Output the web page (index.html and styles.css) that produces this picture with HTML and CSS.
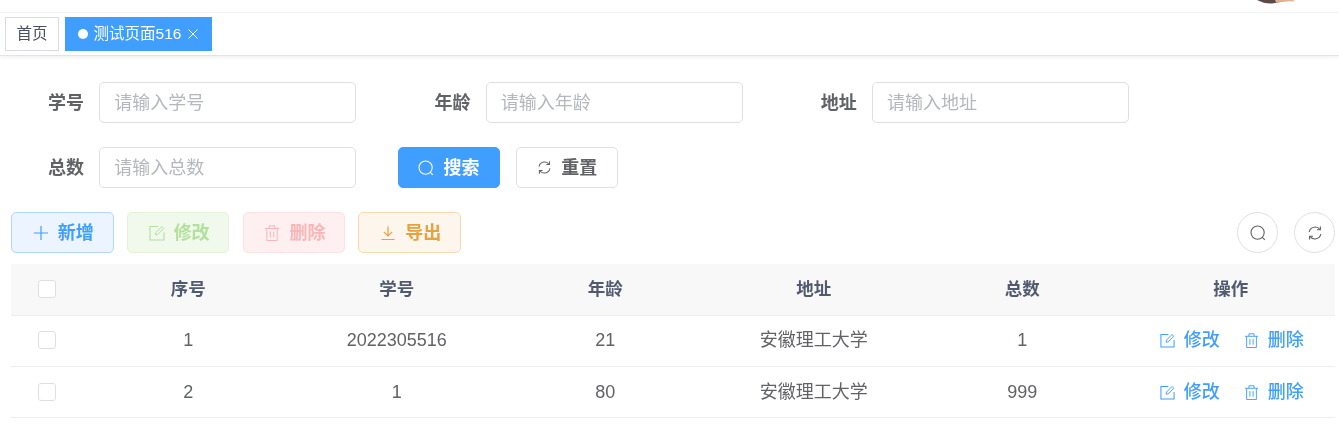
FILE: index.html
```html
<!DOCTYPE html>
<html lang="zh">
<head>
<meta charset="utf-8">
<title>测试页面516</title>
<link rel="stylesheet" href="styles.css">
</head>
<body>
<svg class="sprite" width="0" height="0" aria-hidden="true">
  <symbol id="i-search" viewBox="0 0 16 16"><circle cx="7.6" cy="7.6" r="6.6" fill="none" stroke="currentColor" stroke-width="1.1"/><path d="M12.4 12.4l2.4 2.4" fill="none" stroke="currentColor" stroke-width="1.1"/></symbol>
  <symbol id="i-refresh" viewBox="0 0 16 16"><path d="M2.2 7A6 6 0 0 1 13 4.6M13.8 9A6 6 0 0 1 3 11.4" fill="none" stroke="currentColor" stroke-width="1.1"/><path d="M13.4 1.4v3.4H10M2.6 14.6v-3.4H6" fill="none" stroke="currentColor" stroke-width="1.1"/></symbol>
  <symbol id="i-plus" viewBox="0 0 16 16"><path d="M8 1v14M1 8h14" fill="none" stroke="currentColor" stroke-width="1.2"/></symbol>
  <symbol id="i-edit" viewBox="0 0 16 16"><path d="M9 1.5H1v13.5h14V7.5" fill="none" stroke="currentColor" stroke-width="1.1"/><path d="M6.5 9.8l.4-2.2L12.8 1.6l1.9 1.9-5.9 5.9z" fill="none" stroke="currentColor" stroke-width="1"/></symbol>
  <symbol id="i-trash" viewBox="0 0 16 16"><path d="M1 3.5h14M5.3 3.5V.8h5.4v2.7M2.8 3.5v12h10.4v-12M6.3 6.5v6M9.7 6.5v6" fill="none" stroke="currentColor" stroke-width="1"/></symbol>
  <symbol id="i-down" viewBox="0 0 16 16"><path d="M8 1.5v9M3.8 6.8L8 11l4.2-4.2M1.5 14.5h13" fill="none" stroke="currentColor" stroke-width="1.2"/></symbol>
  <symbol id="i-close" viewBox="0 0 12 12"><path d="M1.5 1.5l9 9M10.5 1.5l-9 9" fill="none" stroke="currentColor" stroke-width="1"/></symbol>
</svg>

<header class="navbar">
  <svg class="avatar-tip" viewBox="0 0 40 4" width="40" height="4" aria-hidden="true">
    <path d="M0 0h30q-8 3-15 3.5Q8 4 0 0z" fill="#5b4a48"/>
    <path d="M18 0h18l2 1.5-6-.3Q24 2 19 2.4z" fill="#e0b090"/>
  </svg>
</header>

<nav class="tags">
  <a class="tag">首页</a>
  <a class="tag tag-active"><span class="dot"></span>测试页面516<svg class="tag-close"><use href="#i-close"/></svg></a>
</nav>

<main class="content">
  <form class="query">
    <div class="field"><label class="field-label">学号</label><div class="input">请输入学号</div></div>
    <div class="field"><label class="field-label">年龄</label><div class="input">请输入年龄</div></div>
    <div class="field"><label class="field-label">地址</label><div class="input">请输入地址</div></div>
    <div class="field"><label class="field-label">总数</label><div class="input">请输入总数</div></div>
    <div class="query-actions">
      <button type="button" class="btn btn-primary"><svg class="ico"><use href="#i-search"/></svg>搜索</button>
      <button type="button" class="btn btn-default"><svg class="ico ico-sm"><use href="#i-refresh"/></svg>重置</button>
    </div>
  </form>

  <div class="toolbar">
    <button type="button" class="btn btn-blue"><svg class="ico"><use href="#i-plus"/></svg>新增</button>
    <button type="button" class="btn btn-green"><svg class="ico"><use href="#i-edit"/></svg>修改</button>
    <button type="button" class="btn btn-red"><svg class="ico"><use href="#i-trash"/></svg>删除</button>
    <button type="button" class="btn btn-orange"><svg class="ico"><use href="#i-down"/></svg>导出</button>
    <div class="toolbar-right">
      <button type="button" class="circle"><svg class="ico-c"><use href="#i-search"/></svg></button>
      <button type="button" class="circle"><svg class="ico-c"><use href="#i-refresh"/></svg></button>
    </div>
  </div>

  <table class="table">
    <colgroup><col class="col-check"><col><col><col><col><col><col></colgroup>
    <thead>
      <tr><th><span class="check"></span></th><th>序号</th><th>学号</th><th>年龄</th><th>地址</th><th>总数</th><th>操作</th></tr>
    </thead>
    <tbody>
      <tr>
        <td><span class="check"></span></td><td>1</td><td>2022305516</td><td>21</td><td>安徽理工大学</td><td>1</td>
        <td class="ops"><a class="link"><svg class="ico-l"><use href="#i-edit"/></svg>修改</a><a class="link"><svg class="ico-l"><use href="#i-trash"/></svg>删除</a></td>
      </tr>
      <tr>
        <td><span class="check"></span></td><td>2</td><td>1</td><td>80</td><td>安徽理工大学</td><td>999</td>
        <td class="ops"><a class="link"><svg class="ico-l"><use href="#i-edit"/></svg>修改</a><a class="link"><svg class="ico-l"><use href="#i-trash"/></svg>删除</a></td>
      </tr>
    </tbody>
  </table>
</main>
</body>
</html>
```

FILE: styles.css
```css
* { box-sizing: border-box; }
html, body { margin: 0; padding: 0; }
body {
  width: 1339px;
  height: 442px;
  overflow: hidden;
  background: #fff;
  color: #606266;
  font-family: "Liberation Sans", "Noto Sans CJK SC", sans-serif;
  font-size: 18px;
  line-height: 20px;
  filter: blur(.3px);
}
.sprite { position: absolute; }

.navbar {
  height: 13px;
  border-bottom: 1px solid #f3f3f5;
  position: relative;
}
.avatar-tip { position: absolute; left: 1257px; top: 0; }

.tags {
  height: 43px;
  padding: 4px 0 0 5px;
  display: flex;
  align-items: flex-start;
  gap: 6px;
  background: #fff;
  border-bottom: 1px solid #e2e3ea;
  box-shadow: 0 1px 4px rgba(0, 21, 41, .08);
}
.tag {
  width: 54px;
  height: 34px;
  display: flex;
  align-items: center;
  justify-content: center;
  border: 1px solid #d8dce5;
  font-size: 15.5px;
  color: #495060;
}
.tag-active {
  width: 147px;
  background: #409eff;
  border-color: #409eff;
  color: #fff;
}
.dot {
  width: 10px;
  height: 10px;
  margin-right: 6px;
  border-radius: 50%;
  background: #fff;
}
.tag-close { width: 12px; height: 12px; margin-left: 6px; }

.content { padding: 26px 4px 0 11px; }

.query {
  display: flex;
  flex-wrap: wrap;
  row-gap: 24px;
}
.field { display: flex; align-items: center; width: 386.4px; }
.field-label {
  width: 73px;
  text-align: right;
  font-weight: 700;
  color: #606266;
}
.input {
  width: 257px;
  height: 41px;
  margin-left: 15.3px;
  padding: 0 14px;
  display: flex;
  align-items: center;
  border: 1px solid #dcdfe6;
  border-radius: 5px;
  color: #b4b7bd;
}
.query-actions { display: flex; gap: 16px; margin-left: .5px; }
.query-actions .btn { width: 102.2px; }

.btn {
  width: 102.7px;
  height: 41px;
  padding: 0;
  display: flex;
  align-items: center;
  justify-content: center;
  border: 1px solid;
  border-radius: 5px;
  font: 700 18px/20px "Liberation Sans", "Noto Sans CJK SC", sans-serif;
}
.ico { width: 16px; height: 16px; margin-right: 9px; }
.ico-sm { width: 15px; height: 15px; }
.btn-primary { background: #409eff; border-color: #409eff; color: #fff; }
.btn-default { background: #fff; border-color: #dcdfe6; color: #606266; }
.btn-blue { background: #ecf5ff; border-color: #b3d8ff; color: #409eff; }
.btn-green { background: #f0f9eb; border-color: #e1f3d8; color: #b3e19d; }
.btn-red { background: #fef0f0; border-color: #fde2e2; color: #fab6b6; }
.btn-orange { background: #fdf6ec; border-color: #f5dab1; color: #e6a23c; }

.toolbar {
  margin-top: 24px;
  display: flex;
  align-items: center;
  gap: 13.1px;
}
.toolbar .btn { padding-left: 2px; }
.toolbar-right { margin-left: auto; display: flex; gap: 16px; }
.circle {
  width: 41px;
  height: 41px;
  padding: 0;
  display: flex;
  align-items: center;
  justify-content: center;
  background: #fff;
  border: 1px solid #dcdfe6;
  border-radius: 50%;
  color: #606266;
}
.ico-c { width: 16px; height: 16px; }

.table {
  width: 1324px;
  margin-top: 11px;
  table-layout: fixed;
  border-collapse: collapse;
}
.col-check { width: 73px; }
.table th, .table td {
  height: 51px;
  padding: 0;
  text-align: center;
  border-bottom: 1px solid #ebeef5;
  font-size: 18px;
}
.table th { background: #f8f8f9; color: #515a6e; font-size: 17.5px; font-weight: 700; }
.table td { color: #606266; }
.table tbody tr:first-child td { padding-bottom: 2px; }
.table td.ops { padding-left: 2px; }
.check {
  display: block;
  width: 18px;
  height: 18px;
  margin-left: 27px;
  background: #fff;
  border: 1px solid #dcdfe6;
  border-radius: 3px;
}
.link {
  display: inline-flex;
  align-items: center;
  vertical-align: middle;
  color: #409eff;
  font-weight: 500;
}
.link + .link { margin-left: 24px; }
.ico-l { width: 15px; height: 15px; margin-right: 9px; }
```
